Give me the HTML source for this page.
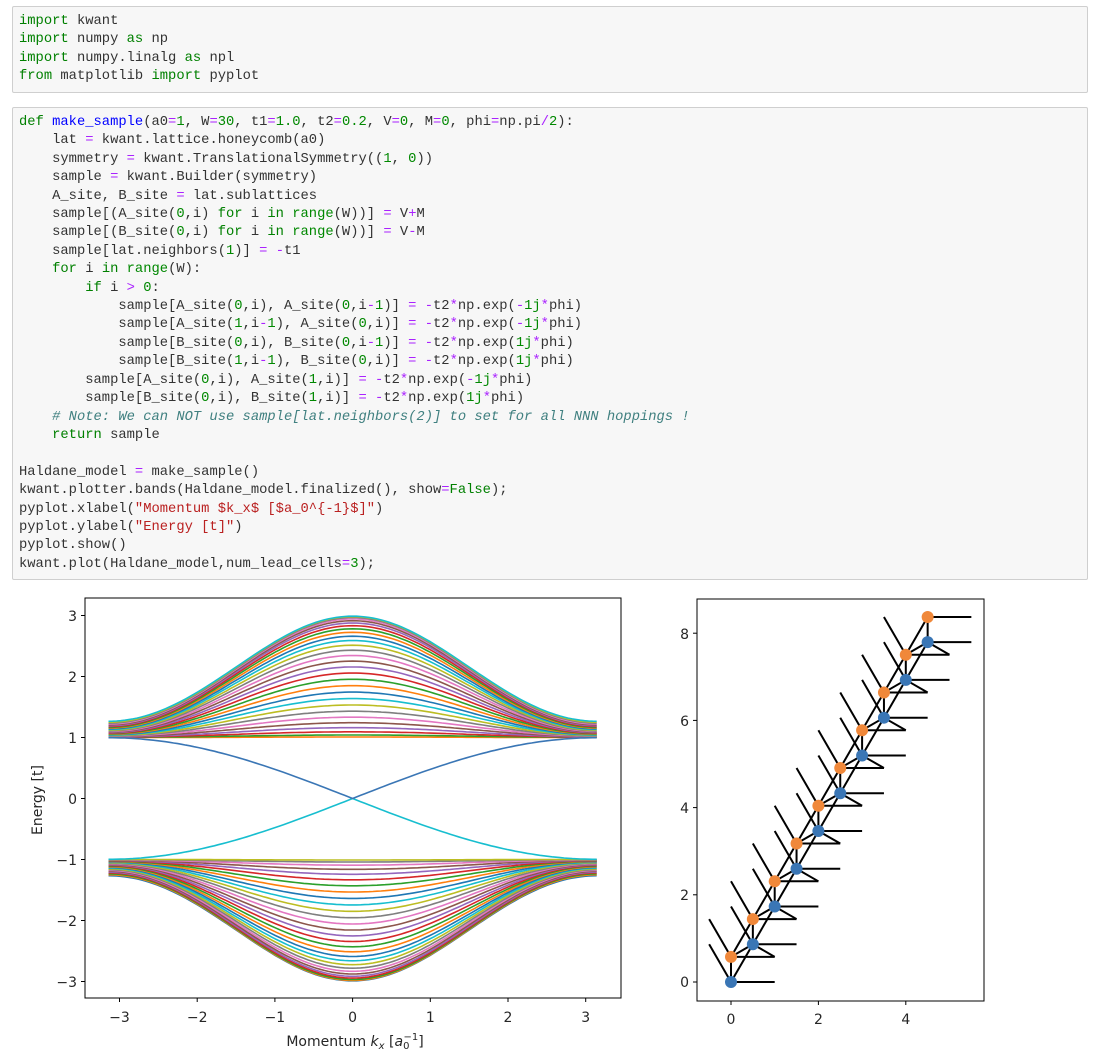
<!DOCTYPE html>
<html><head><meta charset="utf-8">
<style>
html,body{margin:0;padding:0;background:#fff;width:1098px;height:1063px;overflow:hidden;position:relative}
.cell{position:absolute;left:12px;width:1076px;background:#f7f7f7;border:1px solid #cfcfcf;border-radius:2px;box-sizing:border-box}
pre{margin:0;position:absolute;left:6px;font-family:"Liberation Mono",monospace;font-size:13.8px;line-height:18.4px;color:#333;letter-spacing:0}
.k{color:#008000}
.f{color:#0000ff}
.n{color:#008800}
.o{color:#aa22ff}
.s{color:#ba2121}
.c{color:#408080;font-style:italic}
svg{position:absolute;left:0;top:0}
svg text{font-family:"DejaVu Sans",sans-serif;font-size:14px;fill:#262626}
</style></head><body>
<div class="cell" style="top:6px;height:87px"><pre style="top:6px"><span class="k">import</span> kwant
<span class="k">import</span> numpy <span class="k">as</span> np
<span class="k">import</span> numpy.linalg <span class="k">as</span> npl
<span class="k">from</span> matplotlib <span class="k">import</span> pyplot</pre></div>
<div class="cell" style="top:107px;height:473px"><pre style="top:6px"><span class="k">def</span> <span class="f">make_sample</span>(a0<span class="o">=</span><span class="n">1</span>, W<span class="o">=</span><span class="n">30</span>, t1<span class="o">=</span><span class="n">1.0</span>, t2<span class="o">=</span><span class="n">0.2</span>, V<span class="o">=</span><span class="n">0</span>, M<span class="o">=</span><span class="n">0</span>, phi<span class="o">=</span>np.pi<span class="o">/</span><span class="n">2</span>):
    lat <span class="o">=</span> kwant.lattice.honeycomb(a0)
    symmetry <span class="o">=</span> kwant.TranslationalSymmetry((<span class="n">1</span>, <span class="n">0</span>))
    sample <span class="o">=</span> kwant.Builder(symmetry)
    A_site, B_site <span class="o">=</span> lat.sublattices
    sample[(A_site(<span class="n">0</span>,i) <span class="k">for</span> i <span class="k">in</span> <span class="n">range</span>(W))] <span class="o">=</span> V<span class="o">+</span>M
    sample[(B_site(<span class="n">0</span>,i) <span class="k">for</span> i <span class="k">in</span> <span class="n">range</span>(W))] <span class="o">=</span> V<span class="o">-</span>M
    sample[lat.neighbors(<span class="n">1</span>)] <span class="o">=</span> <span class="o">-</span>t1
    <span class="k">for</span> i <span class="k">in</span> <span class="n">range</span>(W):
        <span class="k">if</span> i <span class="o">&gt;</span> <span class="n">0</span>:
            sample[A_site(<span class="n">0</span>,i), A_site(<span class="n">0</span>,i<span class="o">-</span><span class="n">1</span>)] <span class="o">=</span> <span class="o">-</span>t2<span class="o">*</span>np.exp(<span class="o">-</span><span class="n">1j</span><span class="o">*</span>phi)
            sample[A_site(<span class="n">1</span>,i<span class="o">-</span><span class="n">1</span>), A_site(<span class="n">0</span>,i)] <span class="o">=</span> <span class="o">-</span>t2<span class="o">*</span>np.exp(<span class="o">-</span><span class="n">1j</span><span class="o">*</span>phi)
            sample[B_site(<span class="n">0</span>,i), B_site(<span class="n">0</span>,i<span class="o">-</span><span class="n">1</span>)] <span class="o">=</span> <span class="o">-</span>t2<span class="o">*</span>np.exp(<span class="n">1j</span><span class="o">*</span>phi)
            sample[B_site(<span class="n">1</span>,i<span class="o">-</span><span class="n">1</span>), B_site(<span class="n">0</span>,i)] <span class="o">=</span> <span class="o">-</span>t2<span class="o">*</span>np.exp(<span class="n">1j</span><span class="o">*</span>phi)
        sample[A_site(<span class="n">0</span>,i), A_site(<span class="n">1</span>,i)] <span class="o">=</span> <span class="o">-</span>t2<span class="o">*</span>np.exp(<span class="o">-</span><span class="n">1j</span><span class="o">*</span>phi)
        sample[B_site(<span class="n">0</span>,i), B_site(<span class="n">1</span>,i)] <span class="o">=</span> <span class="o">-</span>t2<span class="o">*</span>np.exp(<span class="n">1j</span><span class="o">*</span>phi)
    <span class="c"># Note: We can NOT use sample[lat.neighbors(2)] to set for all NNN hoppings !</span>
    <span class="k">return</span> sample

Haldane_model <span class="o">=</span> make_sample()
kwant.plotter.bands(Haldane_model.finalized(), show<span class="o">=</span><span class="k">False</span>);
pyplot.xlabel(<span class="s">"Momentum $k_x$ [$a_0^{-1}$]"</span>)
pyplot.ylabel(<span class="s">"Energy [t]"</span>)
pyplot.show()
kwant.plot(Haldane_model,num_lead_cells<span class="o">=</span><span class="n">3</span>);</pre></div>

<svg id="s" width="1098" height="1063" viewBox="0 0 1098 1063">
<g id="bands" fill="none" stroke-width="1.6"></g>
<rect x="85" y="598" width="536" height="400" fill="none" stroke="#000" stroke-width="1"/>
<g stroke="#000" stroke-width="1">
<line x1="119.5" y1="998" x2="119.5" y2="1002"/><line x1="197.2" y1="998" x2="197.2" y2="1002"/><line x1="274.9" y1="998" x2="274.9" y2="1002"/><line x1="352.6" y1="998" x2="352.6" y2="1002"/><line x1="430.3" y1="998" x2="430.3" y2="1002"/><line x1="508" y1="998" x2="508" y2="1002"/><line x1="585.7" y1="998" x2="585.7" y2="1002"/>
<line x1="81" y1="615.5" x2="85" y2="615.5"/><line x1="81" y1="676.5" x2="85" y2="676.5"/><line x1="81" y1="737.5" x2="85" y2="737.5"/><line x1="81" y1="798.5" x2="85" y2="798.5"/><line x1="81" y1="859.5" x2="85" y2="859.5"/><line x1="81" y1="920.5" x2="85" y2="920.5"/><line x1="81" y1="981.5" x2="85" y2="981.5"/>
</g>
<g text-anchor="middle">
<text x="119.5" y="1022">−3</text><text x="197.2" y="1022">−2</text><text x="274.9" y="1022">−1</text><text x="352.6" y="1022">0</text><text x="430.3" y="1022">1</text><text x="508" y="1022">2</text><text x="585.7" y="1022">3</text>
</g>
<g text-anchor="end">
<text x="77" y="621">3</text><text x="77" y="682">2</text><text x="77" y="743">1</text><text x="77" y="804">0</text><text x="77" y="865">−1</text><text x="77" y="926">−2</text><text x="77" y="987">−3</text>
</g>
<text x="355" y="1046" text-anchor="middle">Momentum <tspan font-style="italic">k</tspan><tspan font-style="italic" font-size="10" dy="3">x</tspan><tspan dy="-3"> [</tspan><tspan font-style="italic">a</tspan><tspan font-size="10" dy="3">0</tspan><tspan font-size="10" dy="-9" dx="-6">−1</tspan><tspan dy="6">]</tspan></text>
<text transform="translate(42,800) rotate(-90)" text-anchor="middle">Energy [t]</text>

<g id="lat" stroke="#000" stroke-width="2" fill="none"></g>
<g id="dots"></g>
<rect x="697" y="599" width="287" height="402" fill="none" stroke="#000" stroke-width="1"/>
<g stroke="#000" stroke-width="1">
<line x1="731" y1="1001" x2="731" y2="1005"/><line x1="818.4" y1="1001" x2="818.4" y2="1005"/><line x1="905.8" y1="1001" x2="905.8" y2="1005"/>
<line x1="693" y1="982" x2="697" y2="982"/><line x1="693" y1="894.8" x2="697" y2="894.8"/><line x1="693" y1="807.6" x2="697" y2="807.6"/><line x1="693" y1="720.4" x2="697" y2="720.4"/><line x1="693" y1="633.2" x2="697" y2="633.2"/>
</g>
<g text-anchor="middle"><text x="731" y="1024">0</text><text x="818.4" y="1024">2</text><text x="905.8" y="1024">4</text></g>
<g text-anchor="end"><text x="689" y="987">0</text><text x="689" y="900">2</text><text x="689" y="813">4</text><text x="689" y="726">6</text><text x="689" y="639">8</text></g>
</svg>
<script>
(function(){
var NS="http://www.w3.org/2000/svg";
var cols=["#1f77b4","#ff7f0e","#2ca02c","#d62728","#9467bd","#8c564b","#e377c2","#7f7f7f","#bcbd22","#17becf"];
var g=document.getElementById("bands");
function X(k){return 352.6+77.7*k}
function Y(E){return 798.5-60.8*E}
var bands=[];
var N=29;
for(var n=0;n<N;n++){
  var q=Math.PI*(n+0.5)/(N+0.5);
  var a=Math.sqrt(5+4*Math.cos(q))-1;
  var b=0.27*(1-n/N)*(0.3+0.7*(1-n/N));
  bands.push([a,b]);
}
var list=[];
for(var n=0;n<N;n++){list.push(function(a,b){return function(k){var c=(1+Math.cos(k))/2;return -(1+a*c+b*(1-c)*(1-c*0.5));}}(bands[n][0],bands[n][1]));}
var upper=[];
for(var n=N-1;n>=0;n--){upper.push(function(a,b){return function(k){var c=(1+Math.cos(k))/2;return (1+a*c+b*(1-c)*(1-c*0.5));}}(bands[n][0],bands[n][1]));}
function draw(f,col){
  var d="";
  for(var j=0;j<=120;j++){var k=-Math.PI+2*Math.PI*j/120;d+=(j?"L":"M")+X(k).toFixed(1)+","+Y(f(k)).toFixed(1);}
  var p=document.createElementNS(NS,"path");p.setAttribute("d",d);p.setAttribute("stroke",col);g.appendChild(p);
}
for(var i=0;i<list.length;i++)draw(list[i],cols[i%10]);
for(var i=0;i<upper.length;i++)draw(upper[i],cols[(i+1)%10]);
draw(function(k){return -Math.abs(Math.sin(k/2))},"#17becf");
draw(function(k){return Math.abs(Math.sin(k/2))},"#3a76b5");
var L=document.getElementById("lat"),D=document.getElementById("dots");
function PX(x){return 731+43.7*x}function PY(y){return 982-43.6*y}
function ln(x1,y1,x2,y2){var l=document.createElementNS(NS,"line");l.setAttribute("x1",PX(x1));l.setAttribute("y1",PY(y1));l.setAttribute("x2",PX(x2));l.setAttribute("y2",PY(y2));L.appendChild(l);}
var s3=Math.sqrt(3)/2,o=1/Math.sqrt(3);
for(var i=0;i<10;i++){
  var bx=0.5*i,by=s3*i,ox=bx,oy=by+o;
  ln(bx,by,ox,oy);
  if(i<9){ln(ox,oy,bx+0.5,by+s3);ln(bx,by,bx+0.5,by+s3);ln(ox,oy,ox+0.5,oy+s3);
    ln(bx,by,bx-0.5,by+s3);ln(ox,oy,ox-0.5,oy+s3);}
  ln(bx,by,bx+1,by);ln(ox,oy,ox+1,oy);
  if(i>0)ln(bx,by,bx+0.5,by-0.2887);
}
for(var i=0;i<10;i++){
  var bx=0.5*i,by=s3*i;
  [[by,"#3a76b5"],[by+o,"#f0883a"]].forEach(function(v){var c=document.createElementNS(NS,"circle");c.setAttribute("cx",PX(bx));c.setAttribute("cy",PY(v[0]));c.setAttribute("r",6);c.setAttribute("fill",v[1]);D.appendChild(c);});
}
})();
</script>
</body></html>
